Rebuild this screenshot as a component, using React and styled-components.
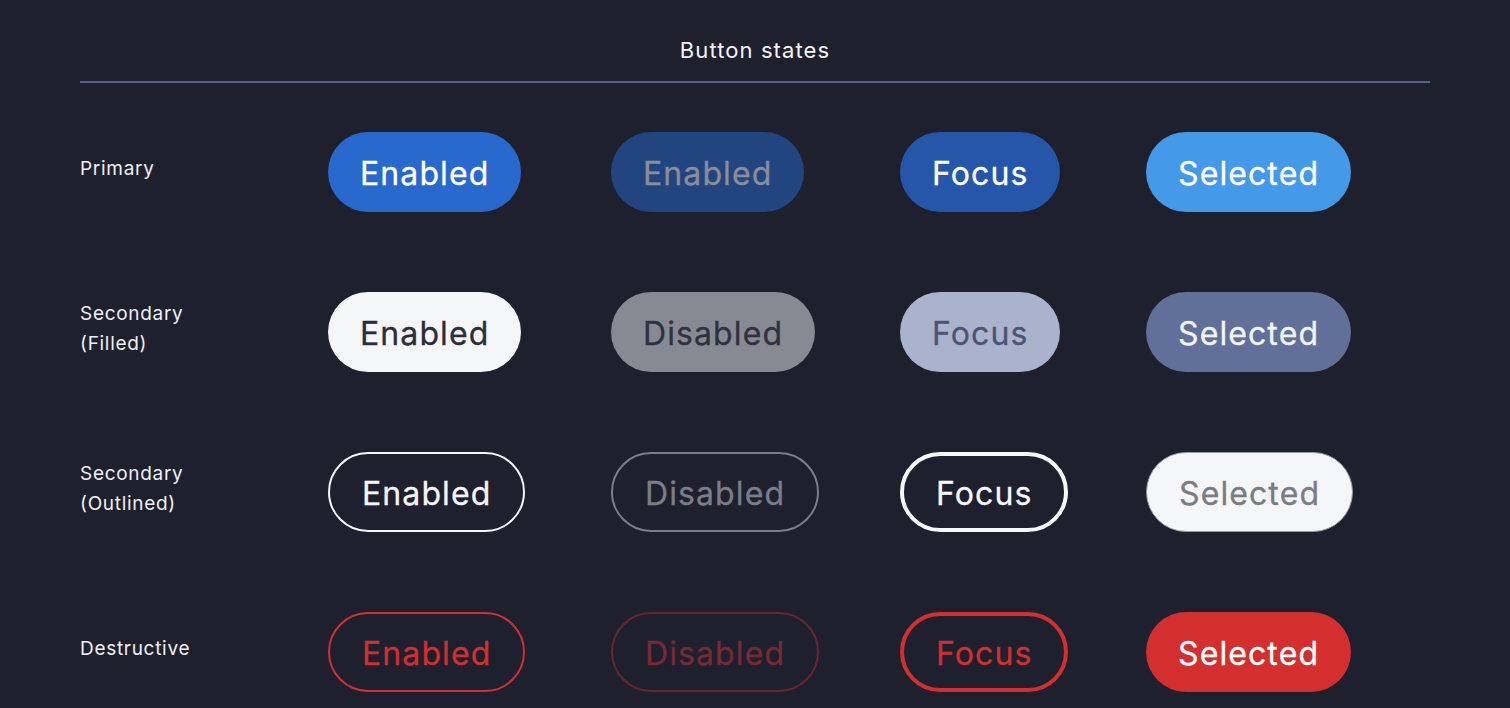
import React from "react";
import styled, { createGlobalStyle, css } from "styled-components";

const GlobalStyle = createGlobalStyle`
  html, body {
    margin: 0;
    padding: 0;
    background: #1f202e;
  }
  body {
    font-family: Inter, "Noto Sans", "Liberation Sans", sans-serif;
    color: #f4f5f8;
  }
`;

const Page = styled.div`
  min-height: 708px;
  padding: 0 80px;
  box-sizing: border-box;
`;

const Title = styled.h2`
  margin: 0;
  padding-top: 36px;
  font-size: 22px;
  line-height: 28px;
  font-weight: 400;
  letter-spacing: 1.1px;
  text-align: center;
  color: #f4f5f8;
`;

const Divider = styled.div`
  height: 2px;
  margin-top: 17px;
  background: #56648c;
`;

const Grid = styled.div`
  display: grid;
  grid-template-columns: 248px 283px 289px 246px 1fr;
  grid-auto-rows: 80px;
  row-gap: 80px;
  align-items: center;
  margin-top: 49px;
`;

const Label = styled.div`
  font-size: 19px;
  line-height: 30px;
  letter-spacing: 0.7px;
  color: #eef0f4;
  margin-top: -6px;
`;

const variants = {
  primary: {
    enabled: css`background: #2968cc; color: #ffffff;`,
    disabled: css`background: #23457f; color: #8a8e99;`,
    focus: css`background: #2656a9; color: #ffffff;`,
    selected: css`background: #4599e9; color: #ffffff;`,
  },
  filled: {
    enabled: css`background: #f5f6f8; color: #2b2d3b;`,
    disabled: css`background: #878a92; color: #2f3140;`,
    focus: css`background: #aab3cc; color: #4b5572;`,
    selected: css`background: #607098; color: #f2f4f8;`,
  },
  outlined: {
    enabled: css`border: 2px solid #f4f5f8; color: #f4f5f8;`,
    disabled: css`border: 2px solid #7b7e88; color: #7b7e88;`,
    focus: css`border: 4px solid #f7f8fa; color: #f7f8fa;`,
    selected: css`background: #f5f6f8; border: 1px solid #9a9ca4; color: #7a7c84;`,
  },
  destructive: {
    enabled: css`border: 2px solid #d32f2f; color: #d32f2f;`,
    disabled: css`border: 2px solid #6a2530; color: #772a33;`,
    focus: css`border: 4px solid #d32f2f; color: #d32f2f;`,
    selected: css`background: #d32f2f; color: #ffffff;`,
  },
};

const Button = styled.button`
  justify-self: start;
  box-sizing: border-box;
  height: 80px;
  padding: 3px 32px 0;
  border: none;
  border-radius: 40px;
  background: transparent;
  font-family: inherit;
  font-size: 32px;
  font-weight: 400;
  letter-spacing: 1.1px;
  line-height: 1;
  white-space: nowrap;
  cursor: pointer;
  -webkit-text-stroke: 0.3px currentColor;
  ${(p) => variants[p.$kind][p.$state]}
`;

const rows = [
  {
    kind: "primary",
    label: ["Primary"],
    buttons: [
      ["enabled", "Enabled"],
      ["disabled", "Enabled"],
      ["focus", "Focus"],
      ["selected", "Selected"],
    ],
  },
  {
    kind: "filled",
    label: ["Secondary", "(Filled)"],
    buttons: [
      ["enabled", "Enabled"],
      ["disabled", "Disabled"],
      ["focus", "Focus"],
      ["selected", "Selected"],
    ],
  },
  {
    kind: "outlined",
    label: ["Secondary", "(Outlined)"],
    buttons: [
      ["enabled", "Enabled"],
      ["disabled", "Disabled"],
      ["focus", "Focus"],
      ["selected", "Selected"],
    ],
  },
  {
    kind: "destructive",
    label: ["Destructive"],
    buttons: [
      ["enabled", "Enabled"],
      ["disabled", "Disabled"],
      ["focus", "Focus"],
      ["selected", "Selected"],
    ],
  },
];

const App = () => {
  return (
    <>
      <GlobalStyle />
      <Page>
        <Title>Button states</Title>
        <Divider />
        <Grid>
          {rows.map((row) => (
            <React.Fragment key={row.kind}>
              <Label>
                {row.label.map((line) => (
                  <div key={line}>{line}</div>
                ))}
              </Label>
              {row.buttons.map(([state, text]) => (
                <Button key={state} $kind={row.kind} $state={state}>
                  {text}
                </Button>
              ))}
            </React.Fragment>
          ))}
        </Grid>
      </Page>
    </>
  );
};

export default App;
